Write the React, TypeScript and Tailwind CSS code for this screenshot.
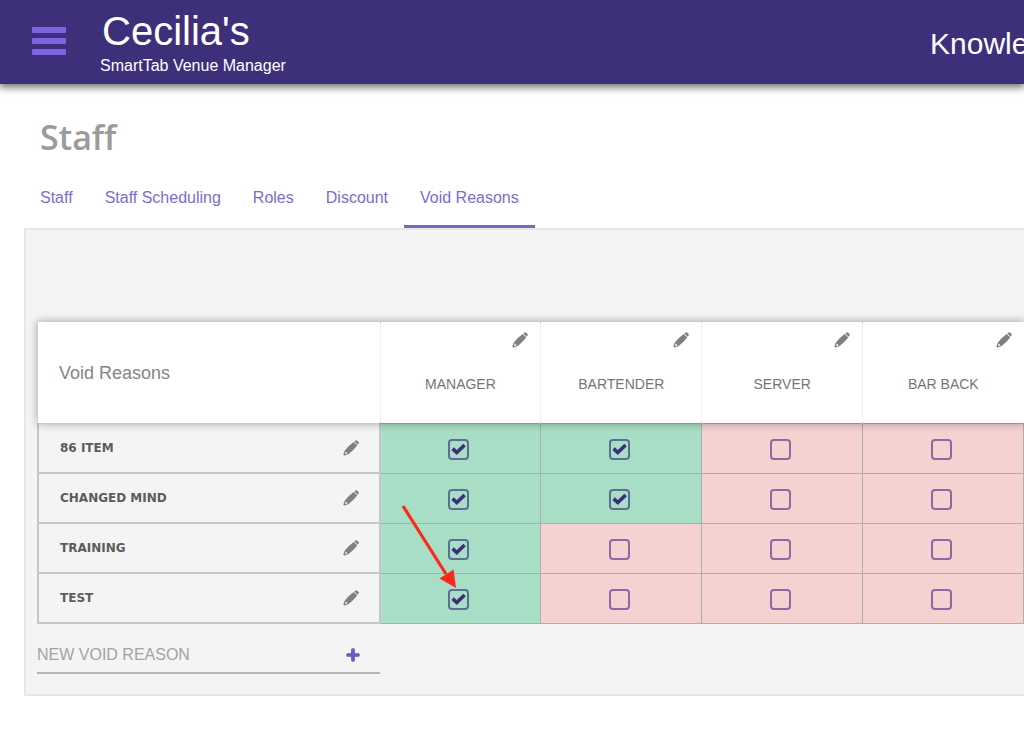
import { useState } from 'react';
import { FaPlus } from 'react-icons/fa';
import clsx from 'clsx';

interface VoidReason {
  name: string;
  allowed: boolean[];
}

const TABS = ['Staff', 'Staff Scheduling', 'Roles', 'Discount', 'Void Reasons'];

const ROLES = ['MANAGER', 'BARTENDER', 'SERVER', 'BAR BACK'];

const INITIAL_REASONS: VoidReason[] = [
  { name: '86 ITEM', allowed: [true, true, false, false] },
  { name: 'CHANGED MIND', allowed: [true, true, false, false] },
  { name: 'TRAINING', allowed: [true, false, false, false] },
  { name: 'TEST', allowed: [true, false, false, false] },
];

function PencilIcon() {
  return (
    <svg viewBox="0 0 16 16" className="block w-4 h-4 fill-[#808080]">
      <path d="M11.3 1.500 12.300.7a1.500 1.500 0 0 1 2 .1l1 1a1.500 1.500 0 0 1 .1 2l-.8 1z" />
      <path
        fillRule="evenodd"
        d="M10.700 1.900 14.300 5.500Q10.500 10.200 5.700 14L1.600 15.500Q.3 15.600.4 14.300L1.800 10.500Q5.700 5.400 10.700 1.900zM2.900 11.500l-.9 2 .6.6 2-.9z"
      />
    </svg>
  );
}

interface PermissionBoxProps {
  label: string;
  checked: boolean;
  onChange: () => void;
}

function PermissionBox({ label, checked, onChange }: PermissionBoxProps) {
  return (
    <span className="inline-grid align-middle mr-1">
      <input
        type="checkbox"
        aria-label={label}
        checked={checked}
        onChange={onChange}
        className={clsx(
          'col-start-1 row-start-1 appearance-none w-[21px] h-[21px] rounded-[4px] border-2 cursor-pointer',
          checked ? 'border-[#5b6f92]' : 'border-[#8b6a9f]',
        )}
      />
      {checked && (
        <svg
          viewBox="0 0 21 21"
          className="col-start-1 row-start-1 w-[21px] h-[21px] pointer-events-none"
          fill="none"
          stroke="#3c2f78"
          strokeWidth="3.6"
        >
          <path d="M4.600 9.600 8.800 13.600 16.600 6" />
        </svg>
      )}
    </span>
  );
}

export default function App() {
  const [activeTab, setActiveTab] = useState('Void Reasons');
  const [reasons, setReasons] = useState(INITIAL_REASONS);
  const [newReason, setNewReason] = useState('');

  const toggle = (row: number, col: number) => {
    setReasons(
      reasons.map((reason, r) =>
        r === row
          ? { ...reason, allowed: reason.allowed.map((value, c) => (c === col ? !value : value)) }
          : reason,
      ),
    );
  };

  const addReason = () => {
    if (!newReason.trim()) return;
    setReasons([...reasons, { name: newReason.toUpperCase(), allowed: ROLES.map(() => false) }]);
    setNewReason('');
  };

  return (
    <div className="min-h-screen overflow-hidden bg-white font-['Liberation_Sans',Arial,sans-serif]">
      {/* Top bar */}
      <header className="flex h-[84px] items-start bg-[#3e2f7a] text-white shadow-[0_2px_8px_1px_rgba(0,0,0,0.6)]">
        <button aria-label="Menu" className="ml-8 mt-6 text-[#7e64e3]">
          <svg viewBox="0 0 34 34" className="block w-[34px] h-[34px] fill-current">
            <rect x="0" y="3" width="34" height="6" rx="1" />
            <rect x="0" y="14" width="34" height="6" rx="1" />
            <rect x="0" y="25" width="34" height="6" rx="1" />
          </svg>
        </button>
        <div className="ml-[34px] pt-2">
          <div className="pl-[2px] text-[40px] leading-[46px]">Cecilia's</div>
          <div className="text-base leading-6">SmartTab Venue Manager</div>
        </div>
        <a href="#" className="ml-auto mt-6 w-[94px] overflow-hidden whitespace-nowrap text-[30px] leading-10">
          Knowledge
        </a>
      </header>

      <main className="pl-6 pb-9">
        <h1 className="pt-[30px] pl-4 font-['Open_Sans','Noto_Sans',sans-serif] text-[34px] font-semibold leading-[46px] text-[#9b9b9b]">
          Staff
        </h1>

        <nav className="flex pt-2">
          {TABS.map((tab) => (
            <a
              key={tab}
              href="#"
              onClick={() => setActiveTab(tab)}
              className={clsx(
                'h-[60px] px-4 pt-[18px] text-base leading-6 text-[#7f6cc4] border-b-3',
                tab === activeTab ? 'border-[#7a68c0]' : 'border-transparent',
              )}
            >
              {tab}
            </a>
          ))}
        </nav>

        <section className="border-y-2 border-l-2 border-[#e6e6e6] bg-[#f4f4f4] pt-[92px] pb-5 pl-[11px]">
          <table className="w-full table-fixed border-collapse">
            <thead className="relative bg-white shadow-[0_0_8px_1px_rgba(0,0,0,0.3)]">
              <tr className="h-[101px]">
                <th className="w-[342px] pl-[21px] text-left text-lg font-normal text-[#858585]">
                  Void Reasons
                </th>
                {ROLES.map((role) => (
                  <th key={role} className="border-l border-[#f0f0f0] p-0 align-top font-normal">
                    <div className="flex justify-end pt-[10px] pr-3">
                      <button aria-label={`Edit ${role}`}>
                        <PencilIcon />
                      </button>
                    </div>
                    <div className="pt-[26px] text-sm leading-5 text-[#757575]">{role}</div>
                  </th>
                ))}
              </tr>
            </thead>
            <tbody>
              {reasons.map((reason, row) => (
                <tr key={reason.name} className="h-[50px]">
                  <th className="border-2 border-t-0 border-[#c6c6c6] p-0">
                    <div className="flex items-center justify-between pl-[21px] pr-5">
                      <span className="font-['DejaVu_Sans',Verdana,sans-serif] text-xs font-bold text-[#5c5c5c]">
                        {reason.name}
                      </span>
                      <button aria-label={`Edit ${reason.name}`}>
                        <PencilIcon />
                      </button>
                    </div>
                  </th>
                  {reason.allowed.map((allowed, col) => (
                    <td
                      key={ROLES[col]}
                      className={clsx(
                        'border border-[#a9b0ab] p-0 pt-[2px] text-center',
                        allowed ? 'bg-[#a8dec6]' : 'bg-[#f5d1d1]',
                      )}
                    >
                      <PermissionBox
                        label={`${reason.name} ${ROLES[col]}`}
                        checked={allowed}
                        onChange={() => toggle(row, col)}
                      />
                    </td>
                  ))}
                </tr>
              ))}
            </tbody>
          </table>

          <div className="mt-3 flex h-[38px] w-[343px] items-center border-b-2 border-[#b5b5b5] pr-5 pt-[2px]">
            <input
              type="text"
              aria-label="New void reason"
              placeholder="NEW VOID REASON"
              value={newReason}
              onChange={(e) => setNewReason(e.target.value)}
              className="min-w-0 flex-1 bg-transparent text-base placeholder:text-[#a3a3a3] outline-none"
            />
            <button aria-label="Add void reason" onClick={addReason} className="text-[#7058c4]">
              <FaPlus className="w-[14px] h-[14px] stroke-current stroke-[40]" />
            </button>
          </div>
        </section>
      </main>

      {/* Callout arrow */}
      <svg viewBox="0 0 60 90" className="absolute left-[400px] top-[502px] w-[60px] h-[90px] pointer-events-none">
        <path d="M3 4 46 72" stroke="#fb2a1d" strokeWidth="3.2" fill="none" />
        <path d="M56 86 39.500 76.500 53.500 67.500z" fill="#fb2a1d" />
      </svg>
    </div>
  );
}
